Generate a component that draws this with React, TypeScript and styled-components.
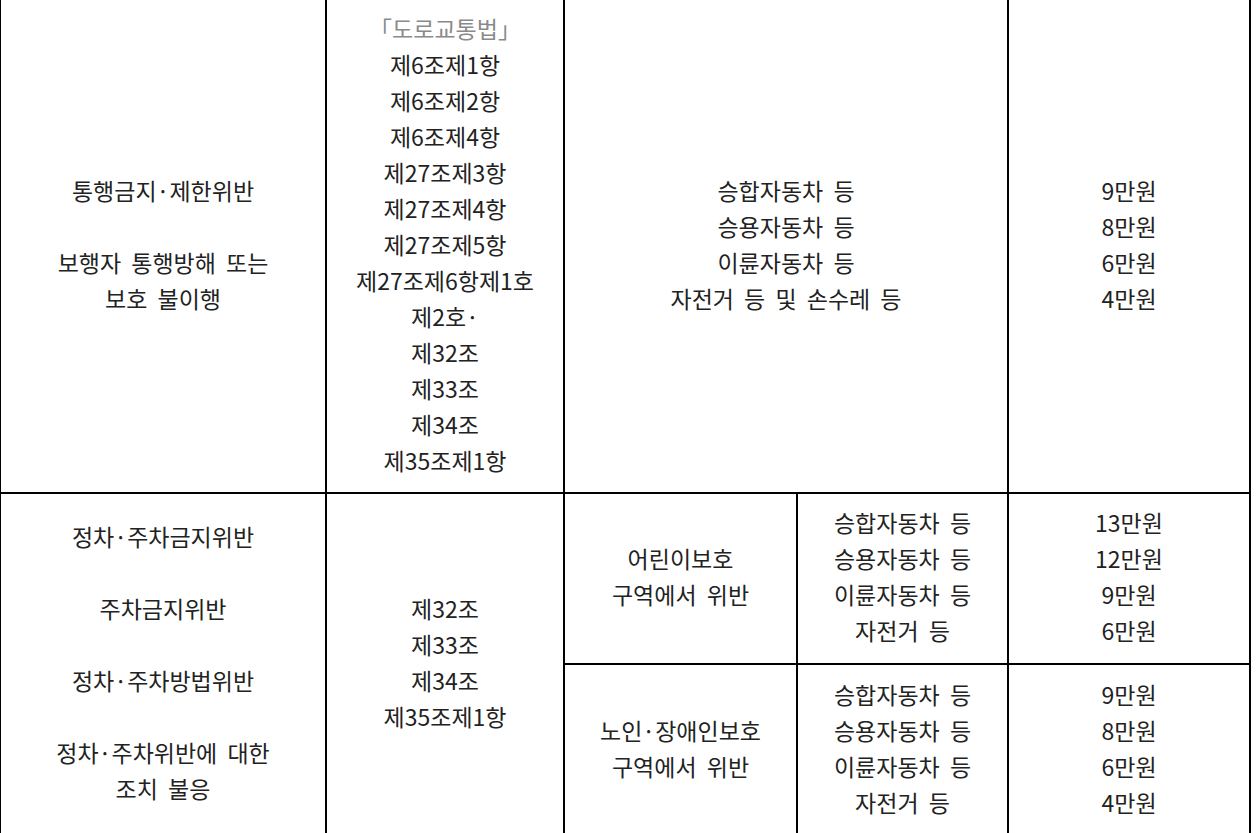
import * as React from 'react';
import styled, { createGlobalStyle } from 'styled-components';

const GlobalStyle = createGlobalStyle`
    html, body {
        margin: 0;
        padding: 0;
        background: #fff;
    }
    body {
        font-family: "Noto Sans CJK KR", "Noto Sans", sans-serif;
        color: #222;
    }
`;

type Block = { lines: string[]; title?: string };

const Lines = ({ lines, title }: Block) => (
    <>
        {title && <StyledTitle>{title}</StyledTitle>}
        {lines.map((line, i) => (
            <StyledLine key={i}>{line || '\u00a0'}</StyledLine>
        ))}
    </>
);

const cars = ['승합자동차 등', '승용자동차 등', '이륜자동차 등', '자전거 등'];

const App = () => {
    return (
        <StyledViewport>
            <GlobalStyle />
            <StyledGrid>
                <StyledCell $col="1" $row="1">
                    <Lines lines={['통행금지·제한위반', '', '보행자 통행방해 또는', '보호 불이행']} />
                </StyledCell>
                <StyledCell $col="2" $row="1">
                    <Lines
                        title="「도로교통법」"
                        lines={[
                            '제6조제1항',
                            '제6조제2항',
                            '제6조제4항',
                            '제27조제3항',
                            '제27조제4항',
                            '제27조제5항',
                            '제27조제6항제1호',
                            '제2호·',
                            '제32조',
                            '제33조',
                            '제34조',
                            '제35조제1항',
                        ]}
                    />
                </StyledCell>
                <StyledCell $col="3 / span 2" $row="1">
                    <Lines lines={['승합자동차 등', '승용자동차 등', '이륜자동차 등', '자전거 등 및 손수레 등']} />
                </StyledCell>
                <StyledCell $col="5" $row="1">
                    <Lines lines={['9만원', '8만원', '6만원', '4만원']} />
                </StyledCell>

                <StyledCell $col="1" $row="2 / span 2">
                    <Lines
                        lines={[
                            '정차·주차금지위반',
                            '',
                            '주차금지위반',
                            '',
                            '정차·주차방법위반',
                            '',
                            '정차·주차위반에 대한',
                            '조치 불응',
                        ]}
                    />
                </StyledCell>
                <StyledCell $col="2" $row="2 / span 2">
                    <Lines lines={['제32조', '제33조', '제34조', '제35조제1항']} />
                </StyledCell>

                <StyledCell $col="3" $row="2">
                    <Lines lines={['어린이보호', '구역에서 위반']} />
                </StyledCell>
                <StyledCell $col="4" $row="2">
                    <Lines lines={cars} />
                </StyledCell>
                <StyledCell $col="5" $row="2">
                    <Lines lines={['13만원', '12만원', '9만원', '6만원']} />
                </StyledCell>

                <StyledCell $col="3" $row="3">
                    <Lines lines={['노인·장애인보호', '구역에서 위반']} />
                </StyledCell>
                <StyledCell $col="4" $row="3">
                    <Lines lines={cars} />
                </StyledCell>
                <StyledCell $col="5" $row="3">
                    <Lines lines={['9만원', '8만원', '6만원', '4만원']} />
                </StyledCell>
            </StyledGrid>
        </StyledViewport>
    );
};

export default App;

const StyledViewport = styled.div`
    height: 833px;
    overflow: hidden;
`;

const StyledGrid = styled.div`
    display: grid;
    width: 1251px;
    box-sizing: border-box;
    grid-template-columns: 324px 236px 231px 209px 240px;
    grid-template-rows: 492px 169px 170px;
    gap: 2px;
    padding: 0 2px 2px 1px;
    background: #000;
`;

const StyledCell = styled.div<{ $col: string; $row: string }>`
    grid-column: ${(props) => props.$col};
    grid-row: ${(props) => props.$row};
    background: #fff;
    display: flex;
    flex-direction: column;
    align-items: center;
    justify-content: center;
    text-align: center;
    padding-bottom: 5px;
`;

const StyledLine = styled.div`
    font-size: 23px;
    line-height: 36px;
    word-spacing: 5px;
    white-space: nowrap;
`;

const StyledTitle = styled(StyledLine)`
    color: #8a8a8a;
`;
